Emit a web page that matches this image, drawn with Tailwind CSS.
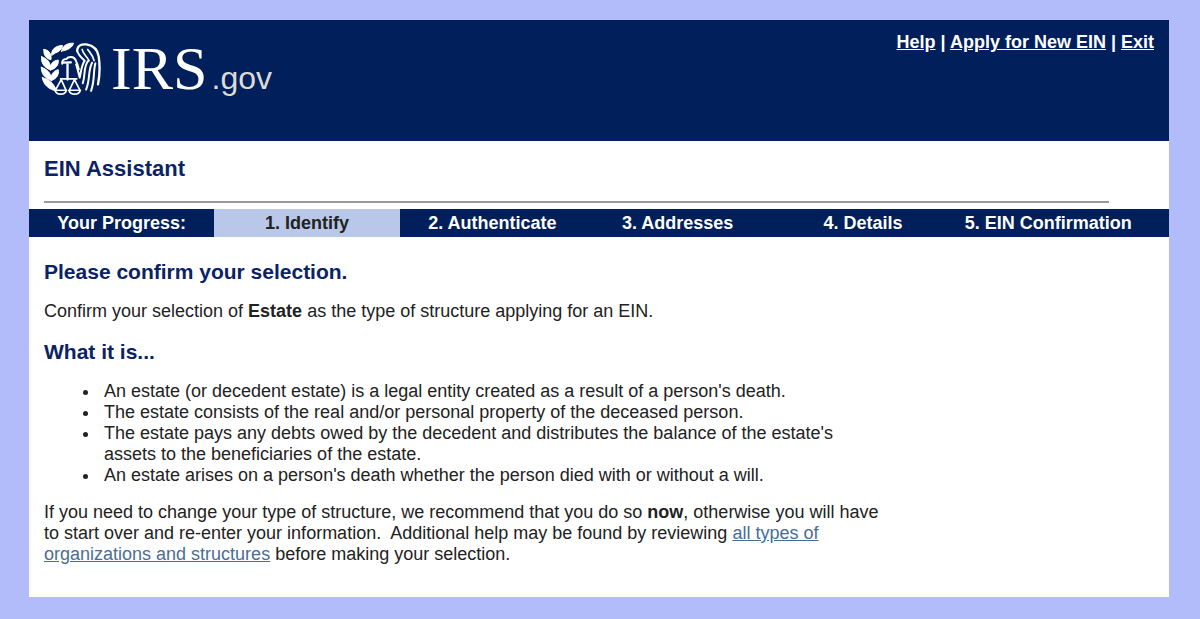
<!DOCTYPE html>
<html lang="en">
<head>
  <meta charset="UTF-8">
  <meta name="viewport" content="width=device-width, initial-scale=1.0">
  <title>EIN Assistant - IRS.gov</title>
  <!-- Tailwind CSS -->
  <script src="https://cdn.jsdelivr.net/npm/@tailwindcss/browser@4"></script>
</head>
<body class="bg-[#b3bcfb] font-['Liberation_Sans',Arial,sans-serif] text-[18px] leading-[21px] text-[#222222]">
  <div class="my-5 mr-[31px] ml-[29px] bg-white pb-8">

    <!-- Header -->
    <header class="flex min-h-[121px] items-start justify-between bg-[#001f5b] pt-3 pr-[15px] pl-[11px] text-white">
      <a href="#" class="flex items-start" aria-label="IRS.gov home">
        <svg class="mt-[10px] mr-[10px] h-[54px] w-[61px]" viewBox="30 36 184 162" fill="none" stroke="#fff" stroke-linecap="round" stroke-linejoin="round" aria-hidden="true">
          <!-- Laurel branch -->
          <g fill="#fff" stroke="#fff" stroke-width="3">
            <path d="M95 63C97 48 110 39 131 39C128 52 114 60 95 63Z" />
            <path d="M65 75C64 58 76 47 98 46C96 58 87 65 78 68Z" />
            <path d="M42 58C53 58 66 68 63 89C48 86 39 72 42 58Z" />
            <path d="M35 80C50 85 64 96 61 119C44 114 32 99 35 80Z" />
            <path d="M34 112C50 117 65 129 64 151C46 146 33 132 34 112Z" />
            <path d="M37 143C54 148 70 156 80 183C59 180 40 166 37 143Z" />
            <path d="M61 120C59 104 68 92 85 90C87 104 78 117 61 120Z" />
            <path d="M64 152C61 136 69 123 85 119C88 133 81 146 64 152Z" />
          </g>
          <!-- Head and scales -->
          <path stroke-width="6" d="M97 101C95 91 102 88 109 87C116 79 132 78 138 91C142 100 145 108 147 118" />
          <path stroke-width="7" d="M99 98L123 97M113 101V149" />
          <path stroke-width="5" d="M92 147H141M94 149L77 180M94 149L108 180M134 149L119 180M134 149L150 180" />
          <path stroke-width="5" d="M75 181H110C105 197 80 197 75 181ZM117 181H152C147 197 122 197 117 181Z" />
          <!-- Wing -->
          <path stroke-width="7" d="M142 62C143 46 155 41 170 43C192 47 204 59 207 79C211 105 211 133 205 163" />
          <path stroke-width="6" d="M142 62C146 76 155 83 165 92C156 103 154 122 150 143C146 130 144 117 139 103" />
          <path stroke-width="5" d="M157 58C160 73 173 80 178 92M174 58C181 68 190 76 193 92" />
          <path stroke-width="6" d="M176 92C160 110 168 132 159 160M187 98C174 124 182 148 169 179M197 100C190 125 196 150 184 183" />
        </svg>
        <span class="flex items-baseline pt-[6px] leading-[60px]">
          <span class="font-['Liberation_Serif','Times_New_Roman',serif] text-[62px]">IRS</span>
          <span class="ml-1 text-[32px] text-[#dddbd6]">.gov</span>
        </span>
      </a>
      <nav class="text-right font-bold">
        <a href="#" class="underline">Help</a> |
        <a href="#" class="underline">Apply for New EIN</a> |
        <a href="#" class="underline">Exit</a>
      </nav>
    </header>

    <h1 class="px-[15px] pt-4 pb-5 text-[22px] leading-6 font-bold text-[#0b2265]">EIN Assistant</h1>
    <hr class="mr-[60px] mb-[6px] ml-[15px] border-t-2 border-[#999999]">

    <!-- Progress bar -->
    <ol class="grid grid-cols-6 bg-[#001f5b] pr-7 text-center leading-7 font-bold text-white">
      <li>Your Progress:</li>
      <li class="bg-[#b9c8e8] text-[#222222]" aria-current="step">1. Identify</li>
      <li>2. Authenticate</li>
      <li>3. Addresses</li>
      <li>4. Details</li>
      <li>5. EIN Confirmation</li>
    </ol>

    <!-- Selection details -->
    <main class="max-w-[872px] px-[15px] pt-[23px]">
      <h2 class="text-[21px] leading-6 font-bold text-[#0b2265]">Please confirm your selection.</h2>
      <p class="mt-[17px]">Confirm your selection of <b>Estate</b> as the type of structure applying for an EIN.</p>
      <h2 class="mt-[18px] text-[21px] leading-6 font-bold text-[#0b2265]">What it is...</h2>
      <ul class="mt-[17px] list-disc pl-14">
        <li class="pl-1">An estate (or decedent estate) is a legal entity created as a result of a person's death.</li>
        <li class="pl-1">The estate consists of the real and/or personal property of the deceased person.</li>
        <li class="pl-1">The estate pays any debts owed by the decedent and distributes the balance of the estate's assets to the beneficiaries of the estate.</li>
        <li class="pl-1">An estate arises on a person's death whether the person died with or without a will.</li>
      </ul>
      <p class="mt-4">If you need to change your type of structure, we recommend that you do so <b>now</b>, otherwise you will have to start over and re-enter your information.&nbsp; Additional help may be found by reviewing <a href="#" class="text-[#4a6d96] underline">all types of organizations and structures</a> before making your selection.</p>
    </main>
  </div>
</body>
</html>
